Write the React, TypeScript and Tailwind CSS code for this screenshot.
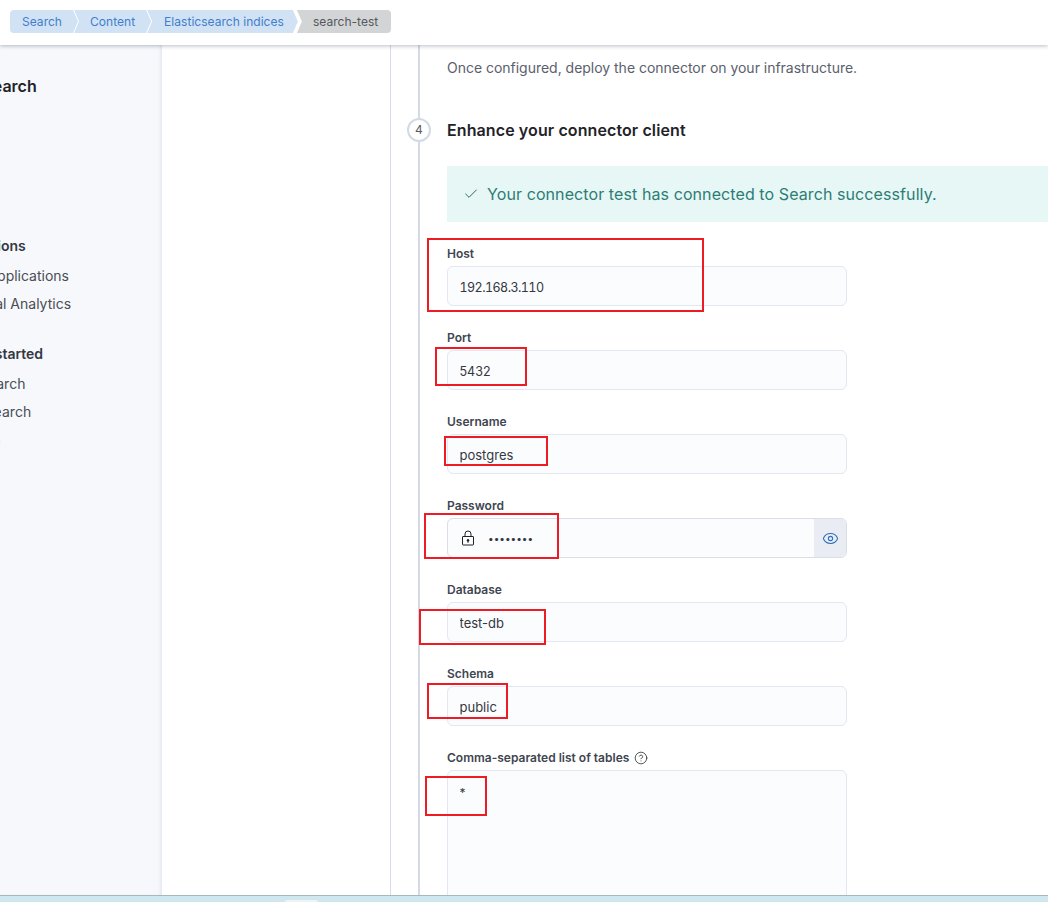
import { Check, CircleHelp, Eye } from "lucide-react";

const crumbs = [
  { label: "Search", className: "pl-3 pr-4 rounded-l-[4px] [clip-path:polygon(0_0,calc(100%-5px)_0,100%_50%,calc(100%-5px)_100%,0_100%)] bg-[#d2e2f5] text-[#3f7fca]" },
  { label: "Content", className: "-ml-[4px] pl-4 pr-4 [clip-path:polygon(0_0,calc(100%-5px)_0,100%_50%,calc(100%-5px)_100%,0_100%,5px_50%)] bg-[#d2e2f5] text-[#3f7fca]" },
  { label: "Elasticsearch indices", className: "-ml-[4px] pl-[17px] pr-[14px] [clip-path:polygon(0_0,calc(100%-5px)_0,100%_50%,calc(100%-5px)_100%,0_100%,5px_50%)] bg-[#d2e2f5] text-[#3f7fca]" },
  { label: "search-test", className: "-ml-[1px] pl-4 pr-[13px] rounded-r-[4px] [clip-path:polygon(0_0,100%_0,100%_100%,0_100%,5px_50%)] bg-[#d3d4d6] text-[#54585e]" },
];

const Header = () => {
  return (
    <header className="relative z-20 h-[45px] shrink-0 bg-white pl-[10px] pt-[10px] shadow-[0_1px_4px_rgba(60,70,90,0.35)]">
      <nav className="flex h-[23px] items-center text-[12px] tracking-[0.03px]">
        {crumbs.map((crumb) => (
          <span key={crumb.label} className={`flex h-[23px] items-center whitespace-nowrap ${crumb.className}`}>
            {crumb.label}
          </span>
        ))}
      </nav>
    </header>
  );
};

const Sidebar = () => {
  return (
    <aside className="relative z-10 w-[162px] shrink-0 overflow-hidden bg-[#f6f8fc] shadow-[inset_-3px_0_3px_-1px_rgba(120,130,150,0.13)]">
      <div className="-ml-[76px] w-[300px] whitespace-nowrap pt-[31px]">
        <p className="ml-[9px] text-[16px] font-semibold leading-5 text-[#1f2329]">Elasticsearch</p>
        <div className="ml-[13px] mt-[140px] text-[14px] text-[#4a4d55]">
          <p className="ml-[4px] font-semibold leading-5 text-[#343741]">Applications</p>
          <p className="mt-[10px] leading-5">Search Applications</p>
          <p className="mt-2 leading-5">Behavioral Analytics</p>
          <p className="ml-[5px] mt-[30px] font-semibold leading-5 text-[#343741]">Getting started</p>
          <p className="mt-[10px] leading-5 tracking-[0.05px]">Elasticsearch</p>
          <p className="mt-2 leading-5 tracking-[0.05px]">Vector Search</p>
          <p className="mt-2 leading-5 text-[#b8bcc6]">AI Search</p>
        </div>
      </div>
    </aside>
  );
};

const Field = ({ label, value, mark, text = "text-[13px]" }: { label: string; value: string; mark: string; text?: string }) => {
  return (
    <div className="relative mt-6 w-[400px]">
      <label className="block text-[12px] font-semibold leading-4 text-[#404550]">{label}</label>
      <input
        readOnly
        value={value}
        className={`mt-1 block h-10 w-full rounded-md border border-[#e3e7ef] bg-[#fbfcfd] pl-[11.5px] pr-3 pt-[2px] text-[#343741] outline-none ${text}`}
      />
      <div className={`pointer-events-none absolute border-2 border-[#ed1c24] ${mark}`} />
    </div>
  );
};

const PasswordField = () => {
  return (
    <div className="relative mt-6 w-[400px]">
      <label className="block text-[12px] font-semibold leading-4 text-[#404550]">Password</label>
      <div className="mt-1 flex h-10 items-center overflow-hidden rounded-md border border-[#d9dee9] bg-[#fbfcfd]">
        <svg width="16" height="16" viewBox="0 0 16 16" className="ml-3 shrink-0 text-[#1f2329]" fill="none" stroke="currentColor">
          <rect x="2.5" y="6.5" width="11" height="8.5" rx="0.5" />
          <path d="M5 6.5V4a3 3 0 0 1 6 0v2.5" />
          <circle cx="8" cy="10.2" r="1.2" fill="currentColor" stroke="none" />
          <rect x="7.4" y="10.4" width="1.2" height="2.2" fill="currentColor" stroke="none" />
        </svg>
        <input
          readOnly
          type="password"
          value="postgres"
          className="ml-[12px] h-full min-w-0 flex-1 bg-transparent text-[10px] text-[#343741] outline-none"
        />
        <span className="flex h-full w-8 shrink-0 items-center justify-center bg-[#e9edf3]">
          <Eye size={17} strokeWidth={1.5} className="text-[#2f6fbd]" />
        </span>
      </div>
      <div className="pointer-events-none absolute -left-[23px] top-[15px] h-[46px] w-[135px] border-2 border-[#ed1c24]" />
    </div>
  );
};

const StepContent = () => {
  return (
    <main className="min-w-0 flex-1 overflow-hidden border-l border-[#d9dce8] bg-white">
      <div className="ml-[27px] h-[900px] border-l-2 border-[#d3dae6] pl-[27px] pt-[13px]">
        <p className="whitespace-nowrap text-[14px] leading-5 tracking-[-0.02px] text-[#5a606c]">
          Once configured, deploy the connector on your infrastructure.
        </p>

        {/* Step 4 */}
        <div className="relative mt-10 flex h-6 items-center">
          <span className="absolute -left-[40px] flex h-6 w-6 items-center justify-center rounded-full border-2 border-[#d3dae6] bg-white text-[12px] text-[#535966]">
            4
          </span>
          <h2 className="whitespace-nowrap text-[16px] font-semibold tracking-[0.1px] text-[#1f2329]">Enhance your connector client</h2>
        </div>

        <div className="mt-6 flex h-14 w-[700px] items-center bg-[#e6f7f5] pl-[16px] text-[16px] tracking-[0.09px] text-[#2d7d75]">
          <Check size={16} strokeWidth={1.4} className="shrink-0 text-[#1f5f58]" />
          <span className="ml-2 whitespace-nowrap">Your connector test has connected to Search successfully.</span>
        </div>

        <Field label="Host" value="192.168.3.110" text="text-[12.5px] tabular-nums tracking-[-0.55px]" mark="-left-[20px] -top-[8px] h-[74px] w-[277px]" />
        <Field label="Port" value="5432" text="text-[12.5px]" mark="-left-[12px] top-[17px] h-[39px] w-[92px]" />
        <Field label="Username" value="postgres" mark="-left-[3px] top-[22px] h-[30px] w-[104px]" />
        <PasswordField />
        <Field label="Database" value="test-db" mark="-left-[28px] top-[27px] h-[36px] w-[127px]" />
        <Field label="Schema" value="public" mark="-left-[20px] top-[17px] h-[36px] w-[81px]" />

        <div className="relative mt-6 w-[400px]">
          <label className="flex items-center gap-[5px] text-[12px] font-semibold leading-4 text-[#404550]">
            Comma-separated list of tables
            <CircleHelp size={14} strokeWidth={1.3} className="text-[#1f2329]" />
          </label>
          <textarea
            readOnly
            value="*"
            className="mt-1 block h-[200px] w-full resize-none rounded-md border border-[#e3e7ef] bg-[#fbfcfd] pl-[11.5px] pr-3 pt-[13px] text-[12px] text-[#343741] outline-none"
          />
          <div className="pointer-events-none absolute -left-[22px] top-[26px] h-[40px] w-[62px] border-2 border-[#ed1c24]" />
        </div>
      </div>
    </main>
  );
};

export default function App() {
  return (
    <div className="flex h-[902px] w-[1048px] flex-col overflow-hidden bg-white font-['Inter',sans-serif]">
      <Header />
      <div className="flex min-h-0 flex-1">
        <Sidebar />
        <div className="w-[228px] shrink-0 bg-white" />
        <StepContent />
      </div>
      {/* Bottom strip */}
      <footer className="relative z-20 h-[7px] shrink-0 border-t border-[#a9b6ba] bg-[#cfe8ef]">
        <div className="absolute bottom-0 left-[285px] h-[2px] w-[33px] rounded-t-sm bg-[#eef3f4]" />
      </footer>
    </div>
  );
}
